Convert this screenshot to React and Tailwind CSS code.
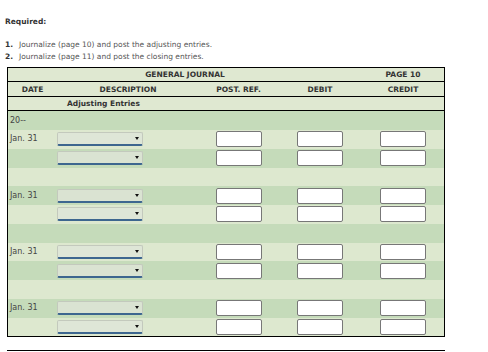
import React from "react";

const font = { fontFamily: '"DejaVu Sans", Verdana, sans-serif' };

const Select = () => (
  <div className="relative h-[14px] w-[86px] rounded-[2px] border border-[#c3c9bd] border-b-2 border-b-[#3d668f] bg-[#dfe5d8]/80">
    <span className="absolute right-[3px] top-[4px] h-0 w-0 border-x-[2.5px] border-t-[3px] border-x-transparent border-t-[#111]" />
  </div>
);

const Box = () => (
  <div className="h-[16px] w-[46px] rounded-[2px] border border-[#777] bg-white" />
);

const Row = ({ dark, date, entry }) => (
  <div
    className={`grid h-[18.75px] grid-cols-[49px_142px_79px_84px_82px] items-center ${
      dark ? "bg-[#c5dbba]" : "bg-[#dde8cf]"
    }`}
  >
    <div className="pl-[2px] text-[8px] text-[#444]">{date}</div>
    <div>{entry && <Select />}</div>
    <div className="flex justify-center">{entry && <Box />}</div>
    <div className="flex justify-center">{entry && <Box />}</div>
    <div className="flex justify-center">{entry && <Box />}</div>
  </div>
);

export default function App() {
  const rows = [{ date: "20--" }];
  for (let g = 0; g < 4; g++) {
    rows.push({ date: "Jan. 31", entry: true });
    rows.push({ date: "", entry: true });
    if (g < 3) rows.push({ date: "" });
  }

  return (
    <div className="h-[352px] w-[488px] overflow-hidden bg-white" style={font}>
      <div className="px-[5px] pt-[16px] text-[7.5px] text-[#333]">
        <div className="font-bold">Required:</div>
        <div className="mt-[11px] flex h-[12px] items-center">
          <span className="w-[14px] font-bold">1.</span>
          <span className="text-[#555]">Journalize (page 10) and post the adjusting entries.</span>
        </div>
        <div className="flex h-[12px] items-center">
          <span className="w-[14px] font-bold">2.</span>
          <span className="text-[#555]">Journalize (page 11) and post the closing entries.</span>
        </div>
      </div>

      <div className="ml-[7px] mt-[5px] w-[438px] border border-black">
        <div className="grid h-[14px] grid-cols-[354px_82px] items-center border-b border-black bg-[#dfe8d1] text-[7.5px] font-bold text-[#333]">
          <div className="text-center">GENERAL JOURNAL</div>
          <div className="text-center">PAGE 10</div>
        </div>
        <div className="grid h-[15px] grid-cols-[49px_142px_79px_84px_82px] items-center border-b border-black bg-[#dfe8d1] text-center text-[7.5px] font-bold text-[#333]">
          <div>DATE</div>
          <div>DESCRIPTION</div>
          <div>POST. REF.</div>
          <div>DEBIT</div>
          <div>CREDIT</div>
        </div>
        <div className="flex h-[14px] items-center border-b border-black bg-[#dfe8d1] pl-[59px] text-[7.5px] font-bold text-[#333]">
          Adjusting Entries
        </div>
        {rows.map((r, i) => (
          <Row key={i} dark={i % 2 === 0} date={r.date} entry={r.entry} />
        ))}
      </div>

      <div className="ml-[7px] mt-[13px] h-px w-[438px] bg-black" />
    </div>
  );
}
